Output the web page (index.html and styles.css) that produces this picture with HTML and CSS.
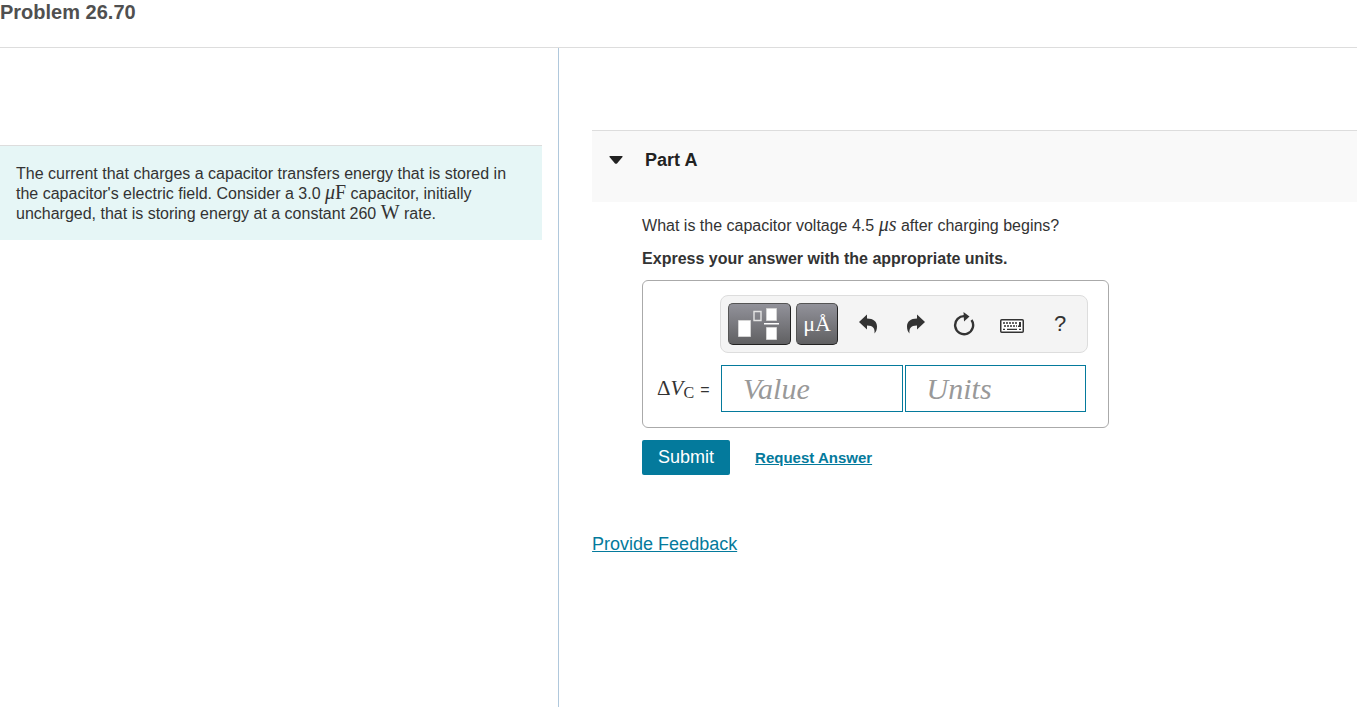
FILE: index.html
```html
<!DOCTYPE html>
<html lang="en">
<head>
  <meta charset="UTF-8" />
  <meta name="viewport" content="width=device-width, initial-scale=1.0"/>
  <title>Problem 26.70</title>
  <link rel="stylesheet" href="styles.css">
</head>
<body>
<header class="page-header">
  <h1>Problem 26.70</h1>
</header>
<div class="content">
  <section class="intro">
    <p class="prompt">The current that charges a capacitor transfers energy that is stored in the capacitor's electric field. Consider a 3.0 <span class="math"><i>μ</i>F</span> capacitor, initially uncharged, that is storing energy at a constant 260 <span class="math">W</span> rate.</p>
  </section>
  <main class="main">
    <section class="part">
      <h2 class="part-header">
        <button type="button" class="part-toggle" aria-expanded="true">
          <svg width="14" height="8" viewBox="0 0 14 8" aria-hidden="true"><path d="M1 0h12q1 0 .5 1L8 7.400q-1 .8-2 0L.5 1Q0 0 1 0z"/></svg>
          Part A
        </button>
      </h2>
      <form class="part-body">
        <p class="question">What is the capacitor voltage 4.5 <i class="math">μs</i> after charging begins?</p>
        <p class="instructions">Express your answer with the appropriate units.</p>
        <div class="answer-box">
          <div class="toolbar">
            <button type="button" class="palette templates" aria-label="Templates">
              <svg width="42" height="32" viewBox="0 0 42 32" aria-hidden="true">
                <path fill="#fff" stroke="#d4d4d4" d="M.5 12.500h12v16H.5zM28.500.5h10v12h-10zM28.500 19.500h10v12h-10z"/>
                <path fill="none" stroke="#e4e4e4" stroke-width="1.400" d="M16 3.500h7v9h-7z"/>
                <path fill="#fff" d="M26 15h15v1.500H26z"/>
              </svg>
            </button>
            <button type="button" class="palette symbols">μÅ</button>
            <button type="button" class="tool" aria-label="Undo">
              <svg width="20" height="20" viewBox="0 0 20 20" aria-hidden="true"><path d="M9 .5v4c6.500 0 10 3 10 8 0 3-.8 5-2.500 7 .5-5-1-8-7.500-8v4L1 8z"/></svg>
            </button>
            <button type="button" class="tool" aria-label="Redo">
              <svg width="20" height="20" viewBox="0 0 20 20" aria-hidden="true"><path d="M11 .5v4c-6.500 0-10 3-10 8 0 3 .8 5 2.500 7-.5-5 1-8 7.500-8v4L19 8z"/></svg>
            </button>
            <button type="button" class="tool" aria-label="Reset">
              <svg width="22" height="24" viewBox="0 0 22 24" aria-hidden="true"><path fill="none" stroke="#333" stroke-width="2.400" d="M12 4.200A9 9 0 1 0 18.500 8"/><path d="M10.500 0l6 4.500-5.500 5z"/></svg>
            </button>
            <button type="button" class="tool" aria-label="Keyboard shortcuts">
              <svg class="keyboard" width="24" height="14" viewBox="0 0 24 14" aria-hidden="true">
                <rect x=".75" y=".75" width="22.500" height="12.500" rx="1" fill="#fff" stroke="#333" stroke-width="1.500"/>
                <path fill="none" stroke="#333" stroke-width="1.500" d="M3 4h15" stroke-dasharray="2 1"/>
                <path fill="none" stroke="#333" stroke-width="1.500" d="M4 7h13" stroke-dasharray="2 1"/>
                <path d="M19 3h2v5h-3V6.500h1zM3 9.800h2v1.200H3zM7 9.800h10v1.200H7zM19 9.800h2v1.200h-2z"/>
              </svg>
            </button>
            <button type="button" class="tool help" aria-label="Help">?</button>
          </div>
          <div class="answer-row">
            <label class="answer-label" for="value">Δ<i>V</i><span class="subscript">C</span> <span class="equals">=</span></label>
            <div class="fields">
              <input type="text" id="value" placeholder="Value">
              <input type="text" id="units" placeholder="Units" aria-label="Units">
            </div>
          </div>
        </div>
        <div class="actions">
          <button type="submit" class="submit">Submit</button>
          <a class="request" href="#">Request Answer</a>
        </div>
      </form>
    </section>
    <a class="feedback" href="#">Provide Feedback</a>
  </main>
</div>
</body>
</html>
```

FILE: styles.css
```css
* {
  box-sizing: border-box;
}
body {
  margin: 0;
  font-family: "Liberation Sans", Arial, sans-serif;
  font-size: 16px;
  color: #333;
  background: #fff;
  display: flex;
  flex-direction: column;
  min-height: 100vh;
}
h1, h2, p {
  margin: 0;
}
button {
  font-family: inherit;
  border: none;
  padding: 0;
  cursor: pointer;
}
.page-header {
  padding-bottom: 23px;
  border-bottom: 1px solid #ddd;
}
h1 {
  font-size: 20px;
  line-height: 24px;
  color: #505050;
}
.content {
  display: flex;
  flex: 1;
}
.intro {
  flex: 0 0 41.2%;
  padding: 97px 16px 0 0;
  border-right: 1px solid #b0c8dc;
}
.prompt {
  padding: 18px 16px 16px;
  border-top: 1px solid #ddd;
  background: #e6f6f6;
  line-height: 20px;
}
.math {
  font-family: "Liberation Serif", "Times New Roman", serif;
  font-size: 20px;
  line-height: 1px;
}
.main {
  flex: 1;
  min-width: 0;
  padding: 82px 0 40px 33px;
}
.part-header {
  height: 72px;
  padding: 19px 17px;
  border-top: 1px solid #ddd;
  background: #f9f9f9;
  line-height: 20px;
}
.part-toggle {
  display: flex;
  align-items: center;
  gap: 22px;
  background: none;
  color: #222;
  font-size: 18px;
  font-weight: bold;
  line-height: 20px;
}
.part-toggle svg {
  fill: #222;
}
.part-body {
  padding-left: 50px;
}
.question {
  padding-top: 14px;
  line-height: 20px;
}
.instructions {
  margin: 13px 0 11px;
  font-weight: bold;
  line-height: 20px;
}
.answer-box {
  width: 467px;
  max-width: 100%;
  padding: 14px 22px 15px 14px;
  border: 1px solid #aaa;
  border-radius: 6px;
}
.toolbar {
  display: flex;
  align-items: center;
  height: 58px;
  margin: 0 -2px 0 63px;
  padding: 0 3px 0 7px;
  border: 1px solid #ddd;
  border-radius: 8px;
  background: #f4f4f4;
}
.palette {
  display: flex;
  align-items: center;
  justify-content: center;
  height: 42px;
  margin-right: 5px;
  border: 1px solid #555;
  border-right-color: #222;
  border-bottom-color: #222;
  border-radius: 5px;
  background: linear-gradient(#92929a, #606062);
  color: #fff;
}
.templates {
  width: 63px;
  padding-right: 2px;
}
.symbols {
  width: 42px;
  margin-right: 6px;
  font-family: "Liberation Serif", "Times New Roman", serif;
  font-size: 22px;
}
.tool {
  display: flex;
  align-items: center;
  justify-content: center;
  flex: 1;
  height: 42px;
  background: none;
  color: #333;
  fill: #333;
}
.keyboard {
  margin-top: 4px;
}
.help {
  font-size: 22px;
}
.answer-row {
  display: flex;
  align-items: center;
  margin-top: 12px;
}
.answer-label {
  flex: 0 0 64px;
  font-family: "Liberation Serif", "Times New Roman", serif;
  font-size: 21px;
  line-height: 24px;
  white-space: nowrap;
}
.subscript {
  font-size: 16px;
  line-height: 1px;
  vertical-align: -3px;
}
.equals {
  margin-left: 1px;
  font-family: "Liberation Sans", Arial, sans-serif;
  font-size: 16px;
}
.fields {
  display: flex;
  flex: 1;
  gap: 2px;
  min-width: 0;
}
.fields input {
  flex: 1;
  width: 100%;
  min-width: 0;
  height: 47px;
  padding: 0 21px;
  border: 1px solid #047a9c;
  border-radius: 0;
  font-family: "Liberation Serif", "Times New Roman", serif;
  font-size: 30px;
  color: #333;
}
.fields input::placeholder {
  color: #999;
  font-style: italic;
}
.actions {
  display: flex;
  align-items: center;
  gap: 25px;
  margin-top: 12px;
}
.submit {
  height: 35px;
  padding: 0 16px;
  border-radius: 2px;
  background: #047a9c;
  color: #fff;
  font-size: 18px;
}
a {
  color: #047a9c;
}
.request {
  font-size: 15px;
  font-weight: bold;
}
.feedback {
  display: inline-block;
  margin-top: 59px;
  font-size: 18px;
}
```
